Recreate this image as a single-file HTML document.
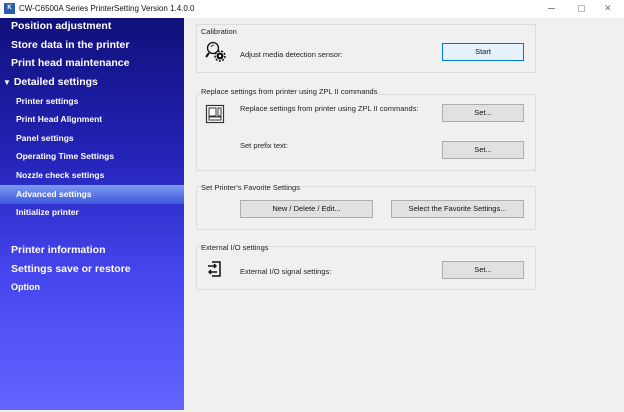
<!DOCTYPE html>
<html><head><style>
*{margin:0;padding:0;box-sizing:border-box}
body{width:624px;height:412px;background:#f0f0f0;font-family:"Liberation Sans",sans-serif;position:relative;overflow:hidden}
.title{position:absolute;left:0;top:0;width:624px;height:18px;background:#fff;font-size:8px;color:#111}
.side{position:absolute;left:0;top:18px;width:184px;height:392px;background:linear-gradient(#10107a 0%,#2323b8 35%,#4545ee 65%,#6464ff 100%)}
.it{position:absolute;color:#fff;font-weight:bold;white-space:nowrap}
.m{left:11px;font-size:10.5px}
.s{left:16px;font-size:8.5px}
.sel{position:absolute;left:0;top:167px;width:184px;height:19px;background:linear-gradient(#7d9af0,#3a58dc)}
.box{position:absolute;left:196px;width:340px;border:1px solid #dcdcdc;background:#f0f0f0}
.lbl{position:absolute;font-size:7.5px;color:#222;white-space:nowrap}
.btn{position:absolute;height:18px;background:#e1e1e1;border:1px solid #adadad;font-size:7.5px;color:#111;text-align:center;line-height:16px}
</style></head><body>
<div class="title">
<div style="position:absolute;left:4px;top:3px;width:11px;height:11px;background:#2a5db0;color:#fff;font-size:6px;font-weight:bold;line-height:11px;text-align:center">K</div>
<div style="position:absolute;left:19px;top:4px">CW-C6500A Series PrinterSetting Version 1.4.0.0</div>
<div style="position:absolute;left:548px;top:8px;width:7px;height:1px;background:#888"></div>
<div style="position:absolute;left:578px;top:5px;width:7px;height:7px;border:1px solid #bbb"></div>
<div style="position:absolute;left:604px;top:3px;font-size:9px;color:#777">✕</div>
</div>
<div class="side">
<div class="sel"></div>
<div class="it m" style="top:2px">Position adjustment</div>
<div class="it m" style="top:21px">Store data in the printer</div>
<div class="it m" style="top:39px">Print head maintenance</div>
<div class="it m" style="top:58px;left:3px"><span style="font-size:8px">▼</span> Detailed settings</div>
<div class="it s" style="top:78px">Printer settings</div>
<div class="it s" style="top:96px">Print Head Alignment</div>
<div class="it s" style="top:115px">Panel settings</div>
<div class="it s" style="top:133px">Operating Time Settings</div>
<div class="it s" style="top:152px">Nozzle check settings</div>
<div class="it s" style="top:171px">Advanced settings</div>
<div class="it s" style="top:189px">Initialize printer</div>
<div class="it m" style="top:226px">Printer information</div>
<div class="it m" style="top:245px">Settings save or restore</div>
<div class="it m" style="top:264px;font-size:9px">Option</div>
</div>

<div class="box" style="top:24px;height:49px"></div>
<div class="lbl" style="left:201px;top:27px">Calibration</div>
<svg style="position:absolute;left:205px;top:41px" width="22" height="22" viewBox="0 0 22 22"><circle cx="8" cy="7" r="5.5" fill="none" stroke="#111" stroke-width="1.3"/><path d="M4 12 L1 16" stroke="#111" stroke-width="2"/><path d="M6 6 Q7 4 9 4" stroke="#111" fill="none" stroke-width=".8"/><circle cx="15" cy="15" r="3.5" fill="#111"/><circle cx="15" cy="15" r="5" fill="none" stroke="#111" stroke-width="1.6" stroke-dasharray="2 1.5"/><circle cx="15" cy="15" r="1.2" fill="#fff"/></svg>
<div class="lbl" style="left:240px;top:50px">Adjust media detection sensor:</div>
<div class="btn" style="left:442px;top:43px;width:82px;background:#e5f1fb;border-color:#0078d7">Start</div>

<div class="box" style="top:94px;height:77px"></div>
<div class="lbl" style="left:201px;top:87px;background:#f0f0f0">Replace settings from printer using ZPL II commands</div>
<svg style="position:absolute;left:205px;top:104px" width="20" height="20" viewBox="0 0 20 20"><rect x="1.5" y="1.5" width="17" height="17" fill="#fff" stroke="#333" stroke-width="1.2"/><rect x="4" y="4" width="7" height="8" fill="none" stroke="#333"/><rect x="13" y="4" width="3" height="8" fill="none" stroke="#333"/><rect x="4" y="13" width="12" height="3" fill="none" stroke="#333"/></svg>
<div class="lbl" style="left:240px;top:104px">Replace settings from printer using ZPL II commands:</div>
<div class="btn" style="left:442px;top:104px;width:82px">Set...</div>
<div class="lbl" style="left:240px;top:141px">Set prefix text:</div>
<div class="btn" style="left:442px;top:141px;width:82px">Set...</div>

<div class="box" style="top:186px;height:44px"></div>
<div class="lbl" style="left:201px;top:183px;background:#f0f0f0">Set Printer's Favorite Settings</div>
<div class="btn" style="left:240px;top:200px;width:133px">New / Delete / Edit...</div>
<div class="btn" style="left:391px;top:200px;width:133px">Select the Favorite Settings...</div>

<div class="box" style="top:246px;height:44px"></div>
<div class="lbl" style="left:201px;top:243px;background:#f0f0f0">External I/O settings</div>
<svg style="position:absolute;left:206px;top:260px" width="16" height="18" viewBox="0 0 16 18"><path d="M6 2 H14 V16 H6" fill="none" stroke="#111" stroke-width="1.5"/><path d="M2 6 H10 M8 4 L10 6 L8 8" fill="none" stroke="#111" stroke-width="1.4"/><path d="M11 12 H3 M5 10 L3 12 L5 14" fill="none" stroke="#111" stroke-width="1.4"/></svg>
<div class="lbl" style="left:240px;top:267px">External I/O signal settings:</div>
<div class="btn" style="left:442px;top:261px;width:82px">Set...</div>
</body></html>
